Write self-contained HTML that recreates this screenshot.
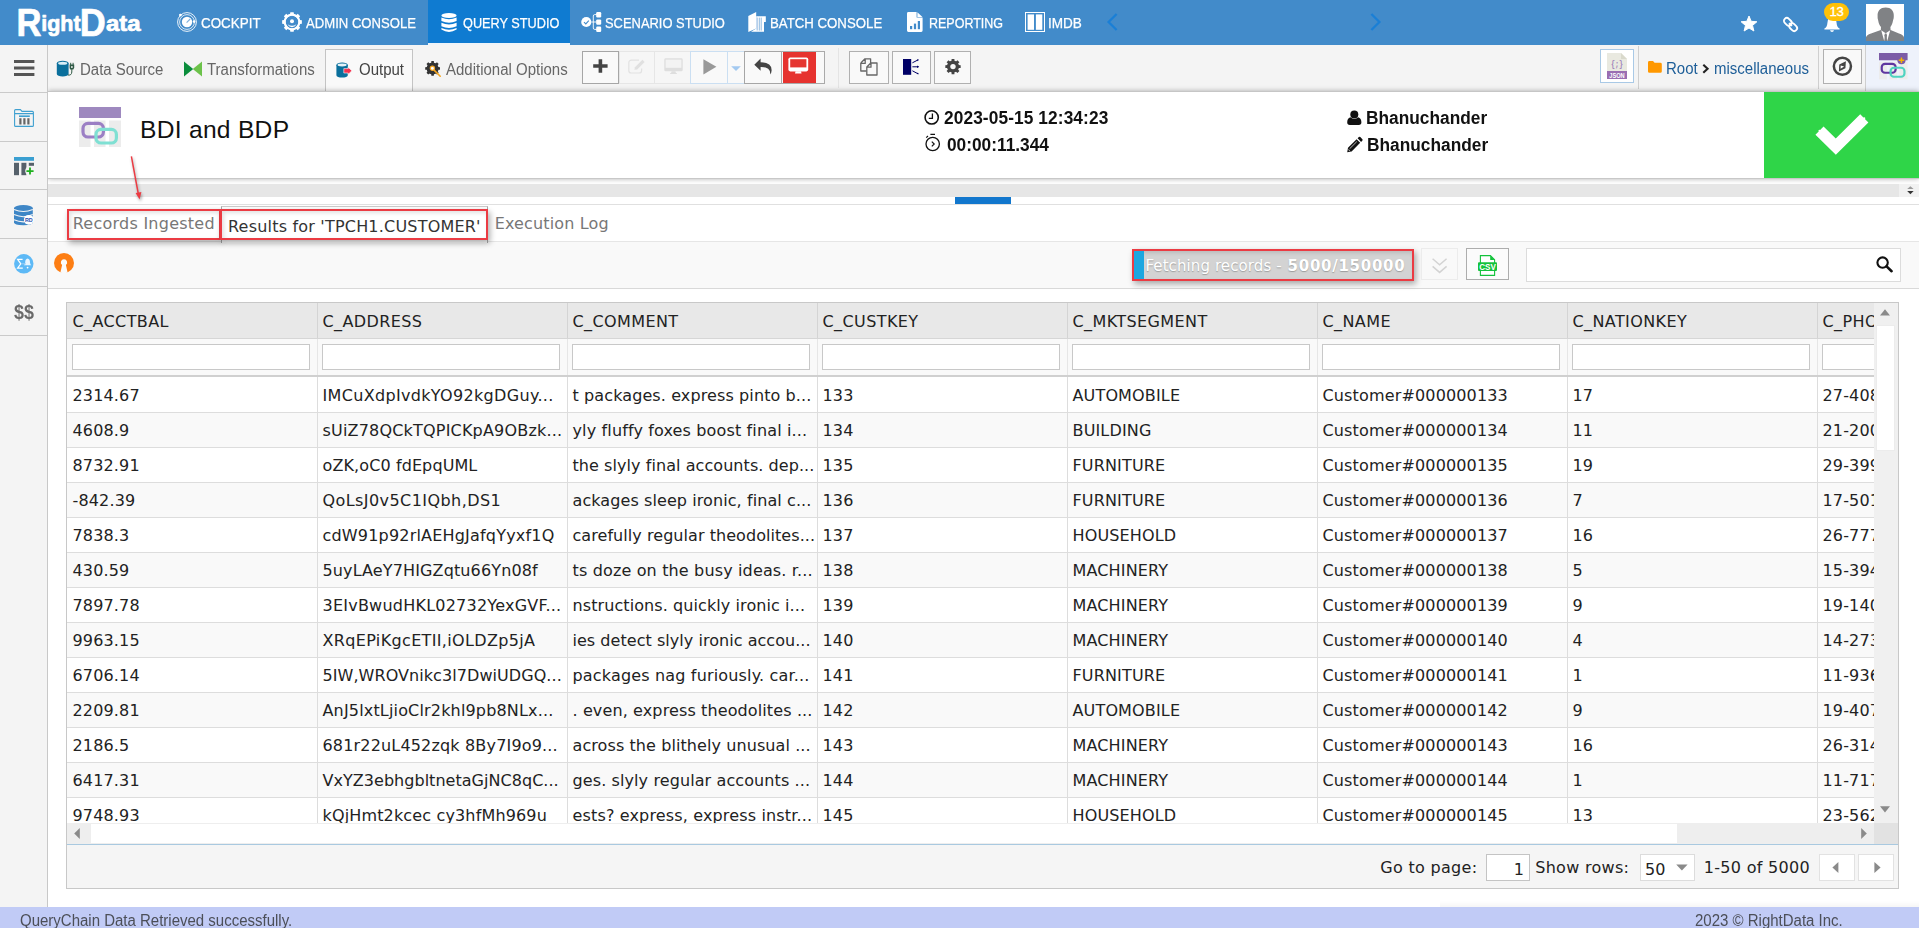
<!DOCTYPE html><html lang="en"><head><meta charset="utf-8"><title>RightData - Query Studio</title><style>
*{box-sizing:border-box;margin:0;padding:0}
html,body{width:1919px;height:928px;overflow:hidden;background:#fff}
body{font-family:"Liberation Sans",sans-serif;font-size:15px;color:#333;position:relative}
.abs{position:absolute}
body>svg{z-index:7}
.v{font-family:"DejaVu Sans","Liberation Sans",sans-serif;font-size:16px;letter-spacing:.15px;white-space:nowrap}
#nav{left:0;top:0;width:1919px;height:45px;background:#428bca;z-index:6}
.nt{position:absolute;top:14px;height:18px;line-height:18px;font-size:14.4px;color:#fff;white-space:nowrap;-webkit-text-stroke:.25px #fff}
#side{left:0;top:45px;width:48px;height:862px;background:#f4f4f4;border-right:1px solid #c8c8c8;z-index:5}
.sl{position:absolute;left:0;width:47px;height:1px;background:#cacaca}
#tb{left:48px;top:45px;width:1871px;height:46px;background:#f4f4f4}
.tt{position:absolute;top:60.5px;height:18px;line-height:18px;font-size:15.6px;color:#666;white-space:nowrap;transform:scaleX(.9615);transform-origin:0 0}
.btn{position:absolute;top:51px;height:33px;background:#f9f9f9;border:1px solid #a6a6a6}
.sep{position:absolute;width:1px;background:#d6d6d6}
#hd{left:48px;top:91px;width:1871px;height:88px;background:#fff;border-top:1px solid #c6c6c6;border-bottom:1px solid #c8c8c8;box-shadow:0 0 5px rgba(0,0,0,.3)}
.inf{position:absolute;font-weight:bold;font-size:18px;color:#111;white-space:nowrap;line-height:20px;height:20px;transform:scaleX(.9611);transform-origin:0 0}
.redbox{position:absolute;border:2px solid #eb3b43;box-shadow:2px 3px 6px rgba(0,0,0,.33), inset 2px 2px 4px rgba(0,0,0,.12)}
table{border-collapse:collapse}
.hc{position:absolute;top:303px;height:35px;width:251px;background:#e8e8e8;line-height:37px;padding-left:5.5px;color:#222;letter-spacing:.4px}
.fc{position:absolute;top:339px;height:36px;width:251px;background:#f9f9f9}
.fc i{position:absolute;left:5px;top:5px;width:238px;height:26px;background:#fff;border:1px solid #c8c8c8}
.row{position:absolute;left:67px;width:1807px;height:35px;border-bottom:1px solid #ddd;overflow:hidden}
.row.alt{background:#f9f9f9}
.c{position:absolute;top:0;height:35px;width:251px;line-height:36px;padding-left:5.5px;color:#222;overflow:hidden}
</style></head><body>
<div id="nav" class="abs">
<div class="abs" style="left:428px;top:0;width:142px;height:45px;background:#0f7bd1;border-bottom:2px solid #eef3f8"></div>
<svg class="abs" style="left:0;top:0;overflow:visible" width="160" height="45" viewBox="0 0 160 45" font-family="Liberation Sans,sans-serif" font-weight="bold" fill="#fff" stroke="#fff" stroke-width=".7" stroke-linejoin="round"><text x="16.6" y="36.4" font-size="38.5" textLength="25" lengthAdjust="spacingAndGlyphs">R</text><text x="41.2" y="30.7" font-size="21.5" textLength="39.4" lengthAdjust="spacingAndGlyphs">ight</text><text x="79.8" y="36.2" font-size="38.5" textLength="26" lengthAdjust="spacingAndGlyphs">D</text><text x="106" y="30.7" font-size="21.5" textLength="34.6" lengthAdjust="spacingAndGlyphs">ata</text></svg>
<div class="nt" style="left:200.5px;transform:scaleX(0.9317);transform-origin:0 0">COCKPIT</div>
<div class="nt" style="left:306.1px;transform:scaleX(0.9110);transform-origin:0 0">ADMIN CONSOLE</div>
<div class="nt" style="left:462.5px;transform:scaleX(0.8842);transform-origin:0 0">QUERY STUDIO</div>
<div class="nt" style="left:604.5px;transform:scaleX(0.8979);transform-origin:0 0">SCENARIO STUDIO</div>
<div class="nt" style="left:770.2px;transform:scaleX(0.9191);transform-origin:0 0">BATCH CONSOLE</div>
<div class="nt" style="left:928.5px;transform:scaleX(0.8687);transform-origin:0 0">REPORTING</div>
<div class="nt" style="left:1048.2px;transform:scaleX(0.9421);transform-origin:0 0">IMDB</div>
</div>
<div id="side" class="abs">
<div class="sl" style="top:47.0px"></div>
<div class="sl" style="top:96.0px"></div>
<div class="sl" style="top:144.0px"></div>
<div class="sl" style="top:193.0px"></div>
<div class="sl" style="top:241.0px"></div>
<div class="sl" style="top:290.0px"></div>
<div class="abs" style="left:14.3px;top:257.3px;font-weight:bold;font-size:20.6px;color:#6a6a6a;line-height:20px;transform:scaleX(.87);transform-origin:0 0">$$</div>
</div>
<div id="tb" class="abs"></div>
<div class="abs" style="left:325px;top:49px;width:88px;height:43px;background:#f9f9f9;border:1px solid #c4c4c4;border-bottom:none"></div>
<div class="tt" style="left:80.0px;color:#666;top:60.5px">Data Source</div>
<div class="tt" style="left:207.20000000000002px;color:#666;top:60.5px">Transformations</div>
<div class="tt" style="left:359.0px;color:#444;top:61.3px">Output</div>
<div class="tt" style="left:445.7px;color:#666;top:60.5px">Additional Options</div>
<div class="btn" style="left:582px;width:37px"></div>
<div class="btn" style="left:619px;width:36px;border-color:#e6e6e6;background:#f6f6f6"></div>
<div class="btn" style="left:654px;width:37px;border-color:#e6e6e6;background:#f6f6f6"></div>
<div class="btn" style="left:690px;width:38px;border-color:#cbdff2"></div>
<div class="btn" style="left:727px;width:18px;border-color:#cbdff2"></div>
<div class="btn" style="left:744px;width:38px"></div>
<div class="btn" style="left:781px;width:44px;border-color:#aaa"></div>
<div class="abs" style="left:783px;top:52px;width:33px;height:31px;background:#e6332f"></div>
<div class="sep" style="left:838px;top:48px;height:40px;background:#e4e4e4"></div>
<div class="btn" style="left:849px;width:40px;border-color:#b0b0b0"></div>
<div class="btn" style="left:892px;width:39px;border-color:#b0b0b0"></div>
<div class="btn" style="left:934px;width:37px;border-color:#b0b0b0"></div>
<div class="btn" style="left:1600px;top:49px;width:34px;height:34px;border-color:#a9c9e6;background:#fff"></div>
<div class="sep" style="left:1638px;top:46px;height:43px;background:#cfcfcf"></div>
<div class="tt" style="left:1665.8px;top:59.5px;color:#1d5e98">Root</div>
<div class="tt" style="left:1714.4px;top:59.5px;color:#1d5e98">miscellaneous</div>
<div class="sep" style="left:1818px;top:46px;height:43px;background:#cfcfcf"></div>
<div class="btn" style="left:1823px;top:49px;width:39px;height:35px;border-color:#b0b0b0"></div>
<div class="abs" style="left:1865px;top:45px;width:54px;height:46px;background:#eef2fb;border-left:1px solid #cfcfcf"></div>
<div id="hd" class="abs"></div>
<div class="abs" style="left:140px;top:115px;font-size:24.6px;line-height:30px;color:#111;white-space:nowrap;letter-spacing:.28px">BDI and BDP</div>
<div class="inf" style="left:944.2px;top:108px;letter-spacing:.1px">2023-05-15 12:34:23</div>
<div class="inf" style="left:947.2px;top:135px">00:00:11.344</div>
<div class="inf" style="left:1365.6px;top:108px">Bhanuchander</div>
<div class="inf" style="left:1367px;top:135px">Bhanuchander</div>
<div class="abs" style="left:1764px;top:92px;width:155px;height:86px;background:#2fd548"></div>
<div class="abs" style="left:48px;top:184px;width:1871px;height:13px;background:#e6e6e6"></div>
<div class="abs" style="left:955px;top:197px;width:56px;height:7px;background:#1277cd"></div>
<div class="abs" style="left:48px;top:204px;width:1871px;height:1px;background:#e0e0e0"></div>
<div class="abs" style="left:48px;top:241px;width:1871px;height:48px;background:#f9f9f9;border-top:1px solid #e6e6e6;border-bottom:1px solid #d9d9d9"></div>
<div class="abs" style="left:221px;top:206px;width:267px;height:37px;background:#fff;border:1px solid #aaa;border-top-color:#ccc;border-bottom:none"></div>
<div class="redbox" style="left:67px;top:209px;width:154px;height:31px;background:#fff"></div>
<div class="redbox" style="left:220px;top:209px;width:268px;height:31px;background:#fff"></div>
<div class="abs v" style="left:72.7px;top:214px;line-height:20px;color:#777;letter-spacing:.25px">Records Ingested</div>
<div class="abs v" style="left:228px;top:217px;line-height:20px;color:#333;letter-spacing:.2px">Results for 'TPCH1.CUSTOMER'</div>
<div class="abs v" style="left:494.7px;top:214px;line-height:20px;color:#777">Execution Log</div>
<div class="redbox" style="left:1132px;top:249px;width:282px;height:32px;background:#d3d3d3"></div>
<div class="abs" style="left:1134px;top:251px;width:10px;height:28px;background:#1ca7e0"></div>
<div class="abs v" style="left:1145.4px;top:255.5px;line-height:20px;font-size:15px;color:#fff;text-shadow:0 1px 1px rgba(120,120,120,.6);letter-spacing:.1px">Fetching records - <b style="letter-spacing:.72px;margin-left:1px">5000/150000</b></div>
<div class="abs" style="left:1421px;top:248px;width:37px;height:32px;border:1px solid #ececec;background:#f9f9f9"></div>
<div class="abs" style="left:1466px;top:248px;width:43px;height:32px;border:1px solid #adadad;background:#fbfbfb"></div>
<div class="abs" style="left:1526px;top:248px;width:375px;height:34px;border:1px solid #dcdcdc;background:#fff"></div>
<div class="abs" style="left:66px;top:302px;width:1833px;height:587px;border:1px solid #c8c8c8;background:#f5f5f5"></div>
<div class="abs" style="left:67px;top:303px;width:1808px;height:520px;overflow:hidden;background:#fff">
</div>
<div class="abs" style="left:67px;top:303px;width:1808px;height:35px;background:#e8e8e8;overflow:hidden"></div>
<div class="hc v" style="left:67px;width:251px;overflow:hidden">C_ACCTBAL</div>
<div class="hc v" style="left:317px;width:251px;overflow:hidden">C_ADDRESS</div>
<div class="hc v" style="left:567px;width:251px;overflow:hidden">C_COMMENT</div>
<div class="hc v" style="left:817px;width:251px;overflow:hidden">C_CUSTKEY</div>
<div class="hc v" style="left:1067px;width:251px;overflow:hidden">C_MKTSEGMENT</div>
<div class="hc v" style="left:1317px;width:251px;overflow:hidden">C_NAME</div>
<div class="hc v" style="left:1567px;width:251px;overflow:hidden">C_NATIONKEY</div>
<div class="hc v" style="left:1817px;width:58px;overflow:hidden">C_PHONE</div>
<div class="abs" style="left:67px;top:338px;width:1808px;height:1px;background:#d6d6d6"></div>
<div class="fc" style="left:67px;width:251px;overflow:hidden"><i></i></div>
<div class="fc" style="left:317px;width:251px;overflow:hidden"><i></i></div>
<div class="fc" style="left:567px;width:251px;overflow:hidden"><i></i></div>
<div class="fc" style="left:817px;width:251px;overflow:hidden"><i></i></div>
<div class="fc" style="left:1067px;width:251px;overflow:hidden"><i></i></div>
<div class="fc" style="left:1317px;width:251px;overflow:hidden"><i></i></div>
<div class="fc" style="left:1567px;width:251px;overflow:hidden"><i></i></div>
<div class="fc" style="left:1817px;width:58px;overflow:hidden"><i></i></div>
<div class="abs" style="left:67px;top:375px;width:1808px;height:2px;background:#d0d0d0"></div>
<div class="row" style="top:378px;height:35px">
<div class="c v" style="left:0px">2314.67</div>
<div class="c v" style="left:250px;letter-spacing:0.329px">IMCuXdpIvdkYO92kgDGuy...</div>
<div class="c v" style="left:500px;letter-spacing:0.107px">t packages. express pinto b...</div>
<div class="c v" style="left:750px">133</div>
<div class="c v" style="left:1000px">AUTOMOBILE</div>
<div class="c v" style="left:1250px">Customer#000000133</div>
<div class="c v" style="left:1500px">17</div>
<div class="c v" style="left:1750px">27-408-997-8430</div>
</div>
<div class="row alt" style="top:413px;height:35px">
<div class="c v" style="left:0px">4608.9</div>
<div class="c v" style="left:250px;letter-spacing:0.190px">sUiZ78QCkTQPICKpA9OBzk...</div>
<div class="c v" style="left:500px;letter-spacing:0.141px">yly fluffy foxes boost final i...</div>
<div class="c v" style="left:750px">134</div>
<div class="c v" style="left:1000px">BUILDING</div>
<div class="c v" style="left:1250px">Customer#000000134</div>
<div class="c v" style="left:1500px">11</div>
<div class="c v" style="left:1750px">21-200-159-5932</div>
</div>
<div class="row" style="top:448px;height:35px">
<div class="c v" style="left:0px">8732.91</div>
<div class="c v" style="left:250px;letter-spacing:0.106px">oZK,oC0 fdEpqUML</div>
<div class="c v" style="left:500px;letter-spacing:0.066px">the slyly final accounts. dep...</div>
<div class="c v" style="left:750px">135</div>
<div class="c v" style="left:1000px">FURNITURE</div>
<div class="c v" style="left:1250px">Customer#000000135</div>
<div class="c v" style="left:1500px">19</div>
<div class="c v" style="left:1750px">29-399-293-6241</div>
</div>
<div class="row alt" style="top:483px;height:35px">
<div class="c v" style="left:0px">-842.39</div>
<div class="c v" style="left:250px;letter-spacing:0.428px">QoLsJ0v5C1IQbh,DS1</div>
<div class="c v" style="left:500px;letter-spacing:0.087px">ackages sleep ironic, final c...</div>
<div class="c v" style="left:750px">136</div>
<div class="c v" style="left:1000px">FURNITURE</div>
<div class="c v" style="left:1250px">Customer#000000136</div>
<div class="c v" style="left:1500px">7</div>
<div class="c v" style="left:1750px">17-501-210-4726</div>
</div>
<div class="row" style="top:518px;height:35px">
<div class="c v" style="left:0px">7838.3</div>
<div class="c v" style="left:250px;letter-spacing:0.192px">cdW91p92rlAEHgJafqYyxf1Q</div>
<div class="c v" style="left:500px;letter-spacing:0.056px">carefully regular theodolites...</div>
<div class="c v" style="left:750px">137</div>
<div class="c v" style="left:1000px">HOUSEHOLD</div>
<div class="c v" style="left:1250px">Customer#000000137</div>
<div class="c v" style="left:1500px">16</div>
<div class="c v" style="left:1750px">26-777-409-5654</div>
</div>
<div class="row alt" style="top:553px;height:35px">
<div class="c v" style="left:0px">430.59</div>
<div class="c v" style="left:250px;letter-spacing:0.127px">5uyLAeY7HIGZqtu66Yn08f</div>
<div class="c v" style="left:500px;letter-spacing:0.150px">ts doze on the busy ideas. r...</div>
<div class="c v" style="left:750px">138</div>
<div class="c v" style="left:1000px">MACHINERY</div>
<div class="c v" style="left:1250px">Customer#000000138</div>
<div class="c v" style="left:1500px">5</div>
<div class="c v" style="left:1750px">15-394-860-4589</div>
</div>
<div class="row" style="top:588px;height:35px">
<div class="c v" style="left:0px">7897.78</div>
<div class="c v" style="left:250px;letter-spacing:0.230px">3EIvBwudHKL02732YexGVF...</div>
<div class="c v" style="left:500px;letter-spacing:0.087px">nstructions. quickly ironic i...</div>
<div class="c v" style="left:750px">139</div>
<div class="c v" style="left:1000px">MACHINERY</div>
<div class="c v" style="left:1250px">Customer#000000139</div>
<div class="c v" style="left:1500px">9</div>
<div class="c v" style="left:1750px">19-140-352-1403</div>
</div>
<div class="row alt" style="top:623px;height:35px">
<div class="c v" style="left:0px">9963.15</div>
<div class="c v" style="left:250px;letter-spacing:0.346px">XRqEPiKgcETII,iOLDZp5jA</div>
<div class="c v" style="left:500px;letter-spacing:0.041px">ies detect slyly ironic accou...</div>
<div class="c v" style="left:750px">140</div>
<div class="c v" style="left:1000px">MACHINERY</div>
<div class="c v" style="left:1250px">Customer#000000140</div>
<div class="c v" style="left:1500px">4</div>
<div class="c v" style="left:1750px">14-273-885-6505</div>
</div>
<div class="row" style="top:658px;height:35px">
<div class="c v" style="left:0px">6706.14</div>
<div class="c v" style="left:250px;letter-spacing:0.070px">5IW,WROVnikc3l7DwiUDGQ...</div>
<div class="c v" style="left:500px;letter-spacing:0.167px">packages nag furiously. car...</div>
<div class="c v" style="left:750px">141</div>
<div class="c v" style="left:1000px">FURNITURE</div>
<div class="c v" style="left:1250px">Customer#000000141</div>
<div class="c v" style="left:1500px">1</div>
<div class="c v" style="left:1750px">11-936-295-6204</div>
</div>
<div class="row alt" style="top:693px;height:35px">
<div class="c v" style="left:0px">2209.81</div>
<div class="c v" style="left:250px;letter-spacing:0.168px">AnJ5lxtLjioClr2khl9pb8NLx...</div>
<div class="c v" style="left:500px;letter-spacing:0.118px">. even, express theodolites ...</div>
<div class="c v" style="left:750px">142</div>
<div class="c v" style="left:1000px">AUTOMOBILE</div>
<div class="c v" style="left:1250px">Customer#000000142</div>
<div class="c v" style="left:1500px">9</div>
<div class="c v" style="left:1750px">19-407-425-2584</div>
</div>
<div class="row" style="top:728px;height:35px">
<div class="c v" style="left:0px">2186.5</div>
<div class="c v" style="left:250px;letter-spacing:0.169px">681r22uL452zqk 8By7I9o9...</div>
<div class="c v" style="left:500px;letter-spacing:0.085px">across the blithely unusual ...</div>
<div class="c v" style="left:750px">143</div>
<div class="c v" style="left:1000px">MACHINERY</div>
<div class="c v" style="left:1250px">Customer#000000143</div>
<div class="c v" style="left:1500px">16</div>
<div class="c v" style="left:1750px">26-314-406-7725</div>
</div>
<div class="row alt" style="top:763px;height:35px">
<div class="c v" style="left:0px">6417.31</div>
<div class="c v" style="left:250px;letter-spacing:0.035px">VxYZ3ebhgbltnetaGjNC8qC...</div>
<div class="c v" style="left:500px;letter-spacing:0.102px">ges. slyly regular accounts ...</div>
<div class="c v" style="left:750px">144</div>
<div class="c v" style="left:1000px">MACHINERY</div>
<div class="c v" style="left:1250px">Customer#000000144</div>
<div class="c v" style="left:1500px">1</div>
<div class="c v" style="left:1750px">11-717-379-4478</div>
</div>
<div class="row" style="top:798px;height:25px;border-bottom:none">
<div class="c v" style="left:0px">9748.93</div>
<div class="c v" style="left:250px;letter-spacing:0.150px">kQjHmt2kcec cy3hfMh969u</div>
<div class="c v" style="left:500px;letter-spacing:0.150px">ests? express, express instr...</div>
<div class="c v" style="left:750px">145</div>
<div class="c v" style="left:1000px">HOUSEHOLD</div>
<div class="c v" style="left:1250px">Customer#000000145</div>
<div class="c v" style="left:1500px">13</div>
<div class="c v" style="left:1750px">23-562-444-8454</div>
</div>
<div class="abs" style="left:317px;top:303px;width:1px;height:35px;background:#d4d4d4"></div>
<div class="abs" style="left:317px;top:339px;width:1px;height:36px;background:#e6e6e6"></div>
<div class="abs" style="left:317px;top:377px;width:1px;height:446px;background:#ddd"></div>
<div class="abs" style="left:567px;top:303px;width:1px;height:35px;background:#d4d4d4"></div>
<div class="abs" style="left:567px;top:339px;width:1px;height:36px;background:#e6e6e6"></div>
<div class="abs" style="left:567px;top:377px;width:1px;height:446px;background:#ddd"></div>
<div class="abs" style="left:817px;top:303px;width:1px;height:35px;background:#d4d4d4"></div>
<div class="abs" style="left:817px;top:339px;width:1px;height:36px;background:#e6e6e6"></div>
<div class="abs" style="left:817px;top:377px;width:1px;height:446px;background:#ddd"></div>
<div class="abs" style="left:1067px;top:303px;width:1px;height:35px;background:#d4d4d4"></div>
<div class="abs" style="left:1067px;top:339px;width:1px;height:36px;background:#e6e6e6"></div>
<div class="abs" style="left:1067px;top:377px;width:1px;height:446px;background:#ddd"></div>
<div class="abs" style="left:1317px;top:303px;width:1px;height:35px;background:#d4d4d4"></div>
<div class="abs" style="left:1317px;top:339px;width:1px;height:36px;background:#e6e6e6"></div>
<div class="abs" style="left:1317px;top:377px;width:1px;height:446px;background:#ddd"></div>
<div class="abs" style="left:1567px;top:303px;width:1px;height:35px;background:#d4d4d4"></div>
<div class="abs" style="left:1567px;top:339px;width:1px;height:36px;background:#e6e6e6"></div>
<div class="abs" style="left:1567px;top:377px;width:1px;height:446px;background:#ddd"></div>
<div class="abs" style="left:1817px;top:303px;width:1px;height:35px;background:#d4d4d4"></div>
<div class="abs" style="left:1817px;top:339px;width:1px;height:36px;background:#e6e6e6"></div>
<div class="abs" style="left:1817px;top:377px;width:1px;height:446px;background:#ddd"></div>
<div class="abs" style="left:1874px;top:303px;width:24px;height:520px;background:#f0f0f0"></div>
<div class="abs" style="left:1876px;top:325px;width:19px;height:126px;background:#fff;border:1px solid #ececec"></div>
<div class="abs" style="left:67px;top:823px;width:1831px;height:21px;background:#eeeeee"></div>
<div class="abs" style="left:91px;top:824px;width:1586px;height:19px;background:#fff"></div>
<div class="abs" style="left:1874px;top:823px;width:24px;height:21px;background:#e2e2e2"></div>
<div class="abs" style="left:67px;top:844px;width:1831px;height:1px;background:#a9c9e0"></div>
<div class="abs v" style="left:1380.3px;top:858px;line-height:20px;color:#222;letter-spacing:.3px">Go to page:</div>
<div class="abs v" style="left:1486px;top:854px;width:44px;height:27px;border:1px solid #c4c4c4;background:#fff;text-align:right;padding-right:5px;line-height:29px;color:#222">1</div>
<div class="abs v" style="left:1535.2px;top:858px;line-height:20px;color:#222;letter-spacing:.3px">Show rows:</div>
<div class="abs v" style="left:1640px;top:854px;width:55px;height:27px;border:1px solid #dcdcdc;background:#fff;padding-left:4px;line-height:29px;color:#222">50</div>
<div class="abs v" style="left:1703.8px;top:858px;line-height:20px;color:#222;letter-spacing:.3px">1-50 of 5000</div>
<div class="abs" style="left:1819px;top:854px;width:36px;height:27px;border:1px solid #e2e2e2;background:#fff"></div>
<div class="abs" style="left:1858px;top:854px;width:36px;height:27px;border:1px solid #e2e2e2;background:#fff"></div>
<div class="abs" style="left:1440px;top:901px;width:479px;height:6px;background:linear-gradient(to bottom,rgba(0,0,0,0),rgba(0,0,0,.035))"></div>
<div class="abs" style="left:0;top:907px;width:1919px;height:21px;background:#c1cbf6"></div>
<div class="abs" style="left:20px;top:911.6px;font-size:15.6px;line-height:18px;color:#4c4f58;white-space:nowrap;transform:scaleX(.9615);transform-origin:0 0">QueryChain Data Retrieved successfully.</div>
<div class="abs" style="left:1695px;top:911.6px;font-size:15.6px;line-height:18px;color:#4c4f58;white-space:nowrap;transform:scaleX(.9615);transform-origin:0 0">2023 © RightData Inc.</div>
<svg class="abs" style="left:177px;top:12px;overflow:visible" width="20" height="20" viewBox="0 0 20 20" ><circle cx="10" cy="10" r="9.4" fill="none" stroke="#fff" stroke-width=".9"/><circle cx="10" cy="10" r="7.4" fill="none" stroke="#fff" stroke-width=".8"/><circle cx="10" cy="10" r="5.2" fill="#fff"/><path d="M9.6 10.6 L13.2 7" stroke="#7fb0dc" stroke-width="1.1" fill="none"/><circle cx="3.4" cy="3.1" r="1.4" fill="#fff"/><circle cx="17.1" cy="9.6" r="1.3" fill="#fff"/></svg>
<svg class="abs" style="left:282px;top:12px;overflow:visible" width="20" height="20" viewBox="0 0 20 20" ><path d="M11.98 17.96 L11.64 19.86 L8.36 19.86 L8.02 17.96 L5.77 17.03 L4.19 18.14 L1.86 15.81 L2.97 14.23 L2.04 11.98 L0.14 11.64 L0.14 8.36 L2.04 8.02 L2.97 5.77 L1.86 4.19 L4.19 1.86 L5.77 2.97 L8.02 2.04 L8.36 0.14 L11.64 0.14 L11.98 2.04 L14.23 2.97 L15.81 1.86 L18.14 4.19 L17.03 5.77 L17.96 8.02 L19.86 8.36 L19.86 11.64 L17.96 11.98 L17.03 14.23 L18.14 15.81 L15.81 18.14 L14.23 17.03Z M10 3.6 a6.4 6.4 0 1 0 0.001 0Z" fill="#fff" fill-rule="evenodd"/><circle cx="10" cy="10" r="7.3" fill="none" stroke="#fff" stroke-width="1.9"/><circle cx="10" cy="9.2" r="2" fill="#fff"/><path d="M5.6 12.2 Q10 15.2 14.4 12.2 Q13.6 14.6 10 15.3 Q6.4 14.6 5.6 12.2Z" fill="#fff"/></svg>
<svg class="abs" style="left:441px;top:13px;overflow:visible" width="16" height="19" viewBox="0 0 16 19" ><ellipse cx="8" cy="2.6" rx="7.6" ry="2.5" fill="#fff"/><path d="M.4 4.6 Q8 8 15.6 4.6 V8 Q8 11.4 .4 8Z" fill="#fff"/><path d="M.4 9.8 Q8 13.2 15.6 9.8 V13.2 Q8 16.6 .4 13.2Z" fill="#fff"/><path d="M.4 15 Q8 18.4 15.6 15 V16.6 Q8 21.2 .4 16.6Z" fill="#fff"/></svg>
<svg class="abs" style="left:581px;top:12px;overflow:visible" width="20" height="20" viewBox="0 0 20 20" ><circle cx="5.3" cy="10" r="5.1" fill="#fff"/><path d="M3 10.2 L4.8 11.9 L7.8 8.6" stroke="#428bca" stroke-width="1.1" fill="none"/><path d="M16 2.6 H13.6 Q12.3 2.6 12.3 4 V16 Q12.3 17.4 13.6 17.4 H16 M10.4 10 H16" stroke="#fff" stroke-width=".9" fill="none"/><rect x="15.2" y="0" width="5" height="5.4" rx="1.2" fill="#fff"/><rect x="15.2" y="7.4" width="5" height="5.3" rx="1.2" fill="#fff"/><rect x="15.2" y="14.6" width="5" height="5.4" rx="1.2" fill="#fff"/></svg>
<svg class="abs" style="left:747.7px;top:12px;overflow:visible" width="19" height="20" viewBox="0 0 19 20" ><path d="M.3 4 L8.2 0 V16.4 L.3 20Z" fill="#fff"/><path d="M8.2 4.2 H17.8 V10 H16 V19.8 H3 L8.2 16.6Z" fill="#fff"/><path d="M9.2 5.4 V18.6" stroke="#a9c8e8" stroke-width="1.3"/><path d="M11.3 5.6 V18.6 M13.2 5.6 V18.6" stroke="#5c9bd3" stroke-width=".7"/></svg>
<svg class="abs" style="left:907px;top:12px;overflow:visible" width="16" height="20" viewBox="0 0 16 20" ><path d="M1.4 0 H9.6 V5.6 H15.6 V18.6 Q15.6 20 14.2 20 H1.4 Q0 20 0 18.6 V1.4 Q0 0 1.4 0Z" fill="#fff"/><path d="M10.4 .2 L15.4 5 H10.4Z" fill="#fff"/><rect x="3" y="14" width="2.2" height="3.2" fill="#428bca"/><rect x="6.9" y="11.6" width="2.2" height="5.6" fill="#428bca"/><rect x="10.8" y="9" width="2.2" height="8.2" fill="#428bca"/></svg>
<svg class="abs" style="left:1025px;top:12px;overflow:visible" width="20" height="20" viewBox="0 0 20 20" ><rect x=".5" y=".5" width="19" height="19" fill="none" stroke="#fff" stroke-width="1"/><rect x="2.6" y="2.4" width="6.4" height="15.4" fill="#fff"/><rect x="10.9" y="2.4" width="6.4" height="15.4" fill="#fff"/></svg>
<svg class="abs" style="left:1107px;top:13px;overflow:visible" width="11" height="18" viewBox="0 0 11 18" ><path d="M9.6 1 L1.6 9 L9.6 17" fill="none" stroke="#1a7fd6" stroke-width="2.3"/></svg>
<svg class="abs" style="left:1369.5px;top:13px;overflow:visible" width="11" height="18" viewBox="0 0 11 18" ><path d="M1.4 1 L9.4 9 L1.4 17" fill="none" stroke="#1a7fd6" stroke-width="2.3"/></svg>
<svg class="abs" style="left:1740px;top:15px;overflow:visible" width="18" height="17" viewBox="0 0 18 17" ><path d="M9.00 1.00 L11.17 6.31 L16.89 6.74 L12.52 10.44 L13.88 16.01 L9.00 13.00 L4.12 16.01 L5.48 10.44 L1.11 6.74 L6.83 6.31Z" fill="#fff" stroke="#fff" stroke-width="1" stroke-linejoin="round"/></svg>
<svg class="abs" style="left:1782px;top:16px;overflow:visible" width="17" height="17" viewBox="0 0 17 17" ><g fill="none" stroke="#fff" stroke-width="1.8" transform="rotate(45 8.5 8.5)"><rect x="0.4" y="5.6" width="8.6" height="5.8" rx="2.9"/><rect x="8" y="5.6" width="8.6" height="5.8" rx="2.9"/></g><path d="M7 7 L10 10" stroke="#fff" stroke-width="1.6"/></svg>
<svg class="abs" style="left:1823px;top:15px;overflow:visible" width="18" height="18" viewBox="0 0 18 18" ><path d="M9 1.2 Q13.4 2 13.6 8 Q13.8 12 16.6 13.6 V14.6 H1.4 V13.6 Q4.2 12 4.4 8 Q4.6 2 9 1.2Z" fill="#fff"/><path d="M7 15.2 H11 Q10.6 17 9 17 Q7.4 17 7 15.2Z" fill="#fff"/></svg>
<div class="abs" style="z-index:8;left:1824px;top:3px;width:25px;height:18px;border-radius:9px;background:#ffc107;color:#fff;font-size:13.2px;line-height:18px;text-align:center;letter-spacing:-.4px;-webkit-text-stroke:.3px #fff">13</div>
<svg class="abs" style="left:1866px;top:4px;overflow:visible" width="38" height="37" viewBox="0 0 38 37" ><rect width="38" height="37" fill="#fff"/><path d="M19.7 3.6 C25 3.6 28 7 27.8 12 C27.9 13.5 27.6 15 27 16.5 C26.6 19.5 25.6 21.5 24.4 23 L24.6 26 L33 29.5 Q37.6 31 38 33.5 V37 H0 V33.5 Q.4 31 5 29.5 L14.8 26 L15 23 C13.6 21.5 12.6 19.5 12.2 16.5 C11.6 15 11.5 13.5 11.6 12 C11.4 7 14.4 3.6 19.7 3.6Z" fill="#808285"/><path d="M15.2 26.2 L18.2 37 L19.7 30 L21.2 37 L24.2 26.2 L19.7 29.2Z" fill="#fff"/><path d="M18.9 29.6 H20.5 L21 31.2 L20.4 37 H19 L18.4 31.2Z" fill="#808285"/></svg>
<svg class="abs" style="left:56px;top:60px;overflow:visible" width="20" height="18" viewBox="0 0 20 18" ><path d="M0.8 3.4000000000000004 V14.000000000000002 A5.9 2.6 0 0 0 12.600000000000001 14.000000000000002 V3.4000000000000004Z" fill="#0a6f9c"/><ellipse cx="6.7" cy="3.4000000000000004" rx="5.9" ry="2.6" fill="#0a6f9c"/><ellipse cx="6.7" cy="3.3" rx="4.6" ry="1.5" fill="#d9eef7"/><path d="M12 15 Q15.6 15.6 15.8 12 V9.6" fill="none" stroke="#2f5a45" stroke-width="1"/><path d="M13.6 4.6 H18.2 V7.2 Q18.2 9.8 15.9 9.8 Q13.6 9.8 13.6 7.2Z" fill="#2f5a45"/><path d="M14.7 2.8 V5 M17.1 2.8 V5" stroke="#2f5a45" stroke-width="1"/><circle cx="15.9" cy="7" r=".9" fill="#f4f4f4"/></svg>
<svg class="abs" style="left:184px;top:61px;overflow:visible" width="18" height="16" viewBox="0 0 18 16" ><path d="M0 .4 L9.2 8 L0 15.6Z" fill="#0b8d3c"/><path d="M18 .4 L8.8 8 L18 15.6Z" fill="#6cc24a"/></svg>
<svg class="abs" style="left:336px;top:61.5px;overflow:visible" width="17" height="16" viewBox="0 0 17 16" ><path d="M0.4 3.0 V13.2 A5.7 2.4 0 0 0 11.8 13.2 V3.0Z" fill="#0a6f9c"/><ellipse cx="6.1000000000000005" cy="3.0" rx="5.7" ry="2.4" fill="#0a6f9c"/><ellipse cx="6.1" cy="3" rx="4.6" ry="1.4" fill="#e6f3f9"/><path d="M7.8 6.6 H12.2 V5.2 L15.8 8.8 L12.2 12.4 V11 H7.8Z" fill="#f4324f" stroke="#f9f9f9" stroke-width=".6"/></svg>
<svg class="abs" style="left:425px;top:61.3px;overflow:visible" width="17" height="17" viewBox="0 0 17 17" ><path d="M13.03 6.05 L15.00 6.17 L15.00 8.63 L13.03 8.75 L12.40 10.29 L13.70 11.76 L11.96 13.50 L10.49 12.20 L8.95 12.83 L8.83 14.80 L6.37 14.80 L6.25 12.83 L4.71 12.20 L3.24 13.50 L1.50 11.76 L2.80 10.29 L2.17 8.75 L0.20 8.63 L0.20 6.17 L2.17 6.05 L2.80 4.51 L1.50 3.04 L3.24 1.30 L4.71 2.60 L6.25 1.97 L6.37 0.00 L8.83 0.00 L8.95 1.97 L10.49 2.60 L11.96 1.30 L13.70 3.04 L12.40 4.51Z" fill="#333"/><circle cx="7.6" cy="7.4" r="6" fill="#333"/><path d="M8.6 8.6 L15.2 15.2" stroke="#f5a623" stroke-width="1.6" stroke-linecap="round"/><circle cx="7.4" cy="7.3" r="2.1" fill="#fff" stroke="#f5a623" stroke-width="1.2"/></svg>
<svg class="abs" style="left:593.3px;top:59px;overflow:visible" width="15" height="14" viewBox="0 0 15 14" ><path d="M7.4 .2 V13.8 M.2 7 H14.6" stroke="#444" stroke-width="3.6" fill="none"/></svg>
<svg class="abs" style="left:628px;top:58.5px;overflow:visible" width="18" height="15" viewBox="0 0 18 15" ><path d="M11 1.2 H3.4 Q.8 1.2 .8 3.8 V11.4 Q.8 14 3.4 14 H11 Q13.6 14 13.6 11.4 V9.6" fill="none" stroke="#e2e2e2" stroke-width="1.2"/><path d="M6.4 10.8 L7 8.2 L14.4 .8 L16.6 3 L9.2 10.4Z" fill="#e0e0e0"/></svg>
<svg class="abs" style="left:663.5px;top:58px;overflow:visible" width="19" height="16" viewBox="0 0 19 16" ><rect x=".3" y=".3" width="18.4" height="13" rx="1.4" fill="#dedede"/><rect x="1.6" y="1.6" width="15.8" height="8.2" fill="#f3f3f3"/><path d="M7.6 13.3 H11.4 L12 15.3 H7Z M6.2 15 H12.8 V15.9 H6.2Z" fill="#dedede"/></svg>
<svg class="abs" style="left:703px;top:59px;overflow:visible" width="14" height="16" viewBox="0 0 14 16" ><path d="M.4 .2 L13.4 7.8 L.4 15.6Z" fill="#999"/></svg>
<svg class="abs" style="left:731px;top:66px;overflow:visible" width="10" height="5" viewBox="0 0 10 5" ><path d="M.2 .2 H9.8 L5 5Z" fill="#a3c9f0"/></svg>
<svg class="abs" style="left:754px;top:57.5px;overflow:visible" width="18" height="17" viewBox="0 0 18 17" ><path d="M6.6 .6 V4.2 Q17.8 4.2 17.6 12.4 Q17.5 14.8 16.2 16.4 Q16.8 8.8 6.6 9 V12.8 L.3 6.7Z" fill="#444"/></svg>
<svg class="abs" style="left:788px;top:57.3px;overflow:visible" width="21" height="17" viewBox="0 0 21 17" ><rect x=".4" y=".4" width="19.8" height="14" rx="1.8" fill="#fff"/><rect x="2.2" y="2.2" width="16.2" height="8.2" fill="#e53530"/><path d="M7.6 14.2 H13 L13.6 16.6 H7Z" fill="#fff"/></svg>
<svg class="abs" style="left:860px;top:58px;overflow:visible" width="18" height="18" viewBox="0 0 18 18" ><path d="M.8 5 L5 .8 H10.6 V6.4 M.8 5 V13 H6.6 M.8 5.4 H5.2 V.8" fill="none" stroke="#666" stroke-width="1.3" stroke-linejoin="round"/><path d="M6.8 9 L10.8 5 H17 V17 H6.8Z M6.8 9.2 H11 V5" fill="#f8f8f8" stroke="#666" stroke-width="1.3" stroke-linejoin="round"/></svg>
<svg class="abs" style="left:903px;top:59px;overflow:visible" width="17" height="16" viewBox="0 0 17 16" ><rect x="0" y="0" width="8.2" height="15.8" fill="#000066"/><path d="M9.4 3.8 L15 .9 M9.4 7.8 H15.4 M9.4 11.8 L15 14.8" stroke="#000066" stroke-width="1" fill="none"/><path d="M16.2 7.8 L14 6.6 V9Z M16 .4 L13.8 .6 L14.8 2.2Z M16 15.3 L13.8 15.1 L14.8 13.5Z" fill="#000066"/></svg>
<svg class="abs" style="left:945px;top:59px;overflow:visible" width="16" height="16" viewBox="0 0 16 16" ><path d="M13.40 6.12 L15.67 6.19 L15.67 9.01 L13.40 9.08 L12.87 10.37 L14.42 12.03 L12.43 14.02 L10.77 12.47 L9.48 13.00 L9.41 15.27 L6.59 15.27 L6.52 13.00 L5.23 12.47 L3.57 14.02 L1.58 12.03 L3.13 10.37 L2.60 9.08 L0.33 9.01 L0.33 6.19 L2.60 6.12 L3.13 4.83 L1.58 3.17 L3.57 1.18 L5.23 2.73 L6.52 2.20 L6.59 -0.07 L9.41 -0.07 L9.48 2.20 L10.77 2.73 L12.43 1.18 L14.42 3.17 L12.87 4.83Z" fill="#444"/><circle cx="8" cy="7.6" r="6" fill="#444"/><circle cx="8" cy="7.6" r="2.7" fill="#f8f8f8"/></svg>
<svg class="abs" style="left:1607px;top:53px;overflow:visible" width="20" height="26" viewBox="0 0 20 26" ><path d="M0 0 H14 L20 6 V26 H0Z" fill="#e9e9e0"/><path d="M14 0 L20 6 H14Z" fill="#d9d9cc"/><rect x="0" y="18" width="20" height="8" fill="#9a6eb2"/><text x="10" y="13.5" font-family="Liberation Mono,monospace" font-size="9" font-weight="bold" fill="#9d7fba" text-anchor="middle" textLength="12" lengthAdjust="spacingAndGlyphs">{;}</text><text x="10" y="24.6" font-family="Liberation Sans,sans-serif" font-size="6.6" font-weight="bold" fill="#fff" text-anchor="middle" textLength="15.4" lengthAdjust="spacingAndGlyphs">JSON</text></svg>
<svg class="abs" style="left:1648px;top:61px;overflow:visible" width="14" height="12" viewBox="0 0 14 12" ><path d="M1.4 0 H5 L6.6 1.8 H12.4 Q13.8 1.8 13.8 3.2 V10.4 Q13.8 11.8 12.4 11.8 H1.4 Q0 11.8 0 10.4 V1.4 Q0 0 1.4 0Z" fill="#ff9800"/></svg>
<svg class="abs" style="left:1702.2px;top:64px;overflow:visible" width="7.4" height="10" viewBox="0 0 7.4 10" ><path d="M1.3 .8 L5.6 4.8 L1.3 8.8" fill="none" stroke="#222" stroke-width="2.1"/></svg>
<svg class="abs" style="left:1832px;top:55.5px;overflow:visible" width="21" height="21" viewBox="0 0 21 21" ><circle cx="10.4" cy="10.3" r="8.55" fill="none" stroke="#444" stroke-width="2.5"/><path d="M13.9 5.3 L13.4 12.3 L6.9 15.6 L7.3 8.6Z" fill="#444"/><path d="M8.7 9.6 L12.2 10.5 L8.5 12.8Z" fill="#fff"/></svg>
<svg class="abs" style="left:1879.4px;top:53px;overflow:visible" width="28.6" height="26.4" viewBox="0 0 42 40" preserveAspectRatio="none"><rect x="0" y="0" width="42" height="11" fill="#7b5ba6"/><rect x="0" y="13.5" width="11.5" height="26.5" fill="#ececec"/><rect x="15" y="13.5" width="11.5" height="26.5" fill="#ececec"/><rect x="30" y="13.5" width="12" height="26.5" fill="#ececec"/><rect x="4" y="16.4" width="20.4" height="13.6" rx="5" fill="none" stroke="#5e36a0" stroke-width="3.2"/><rect x="17" y="22.4" width="20.4" height="13.6" rx="5" fill="none" stroke="#4fd3c0" stroke-width="3.2"/><circle cx="33" cy="11" r="6" fill="#7b5ba6"/><path d="M33 7 V15 M29 11 H37" stroke="#f5b400" stroke-width="2.2"/></svg>
<svg class="abs" style="left:13.7px;top:59.8px;overflow:visible" width="21" height="17" viewBox="0 0 21 17" ><path d="M0 1.6 H20.4 M0 8 H20.4 M0 14.5 H20.4" stroke="#555" stroke-width="3"/></svg>
<svg class="abs" style="left:14px;top:109px;overflow:visible" width="20" height="18" viewBox="0 0 20 18" ><path d="M1.6 .6 H6.4 L8 2.4 H18.4 Q19.4 2.4 19.4 3.4 V16.4 Q19.4 17.4 18.4 17.4 H1.6 Q.6 17.4 .6 16.4 V1.6 Q.6 .6 1.6 .6Z M.6 4.6 H19.4" fill="none" stroke="#3fa0d0" stroke-width="1.1"/><rect x="5" y="6.4" width="10.8" height="1.6" fill="#3fa0d0"/><path d="M6.4 9.2 V15.6 M10.4 9.2 V15.6 M14.4 9.2 V15.6" stroke="#666" stroke-width="2.2"/></svg>
<svg class="abs" style="left:14px;top:156.6px;overflow:visible" width="20" height="18.4" viewBox="0 0 20 18.4" ><rect x="0" y="0" width="20" height="3.8" fill="#3a9fd1"/><rect x="0" y="5.8" width="5" height="12.4" fill="#56616b"/><rect x="7.4" y="5.8" width="5" height="12.4" fill="#56616b"/><rect x="14.8" y="5.8" width="5.2" height="3" fill="#56616b"/><circle cx="16" cy="14" r="4.8" fill="#f4f4f4"/><path d="M16 10.6 V17.6 M12.4 14.1 H19.6" stroke="#1eb01e" stroke-width="1.8"/></svg>
<svg class="abs" style="left:14px;top:204.6px;overflow:visible" width="20" height="20.4" viewBox="0 0 20 20.4" ><path d="M0 3 V17.2 Q0 20.2 9.4 20.2 Q18.8 20.2 18.8 17.2 V3Z" fill="#3e86c6"/><ellipse cx="9.4" cy="3" rx="9.4" ry="2.9" fill="#3e86c6"/><path d="M0 4.4 Q9.4 8.6 18.8 4.4 M0 9.6 Q9.4 13.8 18.8 9.6 M0 14.8 Q9.4 19 18.8 14.8" fill="none" stroke="#f4f4f4" stroke-width="1.1"/><circle cx="14.8" cy="14.8" r="4.9" fill="#fff"/><text x="14.8" y="16.8" font-family="Liberation Sans,sans-serif" font-size="5.4" font-weight="bold" fill="#2d4fb0" text-anchor="middle">RD</text></svg>
<svg class="abs" style="left:14.2px;top:253.8px;overflow:visible" width="19.6" height="19.6" viewBox="0 0 19.6 19.6" ><circle cx="9.8" cy="9.8" r="9.7" fill="#5db9f6"/><path d="M8.6 5.4 H3.6 L6.8 9.8 L3.6 14.2 H8.8" fill="none" stroke="#fff" stroke-width="1.2"/><path d="M13.6 4.6 Q16 5 16 8.4 Q16.2 10.4 17.4 11.2 H9.8 Q11 10.4 11.2 8.4 Q11.2 5 13.6 4.6Z" fill="#e8f5ff"/><path d="M7 9.8 H12" stroke="#9ccff5" stroke-width="1"/><circle cx="13.6" cy="13.6" r=".9" fill="#fff"/></svg>
<svg class="abs" style="left:78.8px;top:107px;overflow:visible" width="42" height="40" viewBox="0 0 42 40" preserveAspectRatio="none"><rect x="0" y="0" width="42" height="11" fill="#9e89bf"/><rect x="0" y="13.5" width="11.5" height="26.5" fill="#ececec"/><rect x="15" y="13.5" width="11.5" height="26.5" fill="#ececec"/><rect x="30" y="13.5" width="12" height="26.5" fill="#ececec"/><rect x="4" y="16.4" width="20.4" height="13.6" rx="5" fill="none" stroke="#9b7fc4" stroke-width="3.2"/><rect x="17" y="22.4" width="20.4" height="13.6" rx="5" fill="none" stroke="#7fe0d3" stroke-width="3.2"/></svg>
<svg class="abs" style="left:923.6px;top:110px;overflow:visible" width="16" height="15" viewBox="0 0 16 15" ><circle cx="7.7" cy="7.4" r="6.6" fill="none" stroke="#111" stroke-width="1.6"/><path d="M8.4 3.6 V8.3 H4.8" fill="none" stroke="#111" stroke-width="1.3"/></svg>
<svg class="abs" style="left:925.4px;top:132.6px;overflow:visible" width="16" height="18.4" viewBox="0 0 16 18.4" ><circle cx="7.7" cy="11" r="6.7" fill="none" stroke="#111" stroke-width="1.3"/><path d="M5.4 1.4 H10 M1.2 4.6 L3 3" stroke="#111" stroke-width="1.2" fill="none"/><path d="M6.8 8.6 L9.2 11 L6.8 13.4" fill="none" stroke="#111" stroke-width="1.2"/></svg>
<svg class="abs" style="left:1346.6px;top:110px;overflow:visible" width="15" height="15.4" viewBox="0 0 15 15.4" ><circle cx="7.3" cy="4.4" r="4" fill="#111"/><path d="M3.4 7.2 Q7.3 10.6 11.2 7.2 Q14.4 8.2 14.4 12.2 Q14.4 15 11.8 15 H2.8 Q.2 15 .2 12.2 Q.2 8.2 3.4 7.2Z" fill="#111"/></svg>
<svg class="abs" style="left:1346.6px;top:136.8px;overflow:visible" width="16" height="15.4" viewBox="0 0 16 15.4" ><path d="M.2 15.2 L1 10.8 L9.6 2.2 L13.2 5.8 L4.6 14.4Z M10.6 1.3 L11.9 0 Q12.6 -.5 13.3 .1 L15.4 2.2 Q16 2.9 15.4 3.6 L14.1 4.9Z" fill="#111"/><path d="M2.6 11.8 L9.8 4.6" stroke="#fff" stroke-width=".7"/><path d="M1.2 12.4 L3 14.2" stroke="#fff" stroke-width=".7"/></svg>
<svg class="abs" style="left:1764px;top:92px;overflow:visible" width="155" height="86" viewBox="0 0 155 86" ><path d="M55.5 38.7 L71.8 54.6 L100.3 26.3" fill="none" stroke="#fff" stroke-width="11.6" stroke-linejoin="miter"/><path d="M55.5 38.7 L71.8 54.6 L100.3 26.3" fill="none" stroke="#fff" stroke-width="2" stroke-linejoin="round" stroke-linecap="round" transform="translate(0 0)"/></svg>
<svg class="abs" style="left:125px;top:150px;overflow:visible" width="24" height="56" viewBox="0 0 24 56" ><g style="filter:drop-shadow(1px 2px 1.5px rgba(0,0,0,.35))"><path d="M6.4 6.4 L13.6 45.5" stroke="#eb3b43" stroke-width="1.5" fill="none"/><path d="M14.6 49.6 L10.6 43 L16.4 42Z" fill="#eb3b43"/></g></svg>
<div class="abs" style="left:1899px;top:184px;width:20px;height:13px;background:#f1f1f1"></div>
<svg class="abs" style="left:1906.6px;top:186px;overflow:visible" width="7" height="8.4" viewBox="0 0 7 8.4" ><path d="M.2 2.9 H6.6 L3.4 .2Z" fill="#9a9a9a"/><path d="M.2 5 H6.6 L3.4 8.2Z" fill="#333"/></svg>
<svg class="abs" style="left:54.2px;top:252.6px;overflow:visible" width="20" height="20" viewBox="0 0 20 20" ><circle cx="10" cy="10" r="10" fill="#fd7e14"/><path d="M10 6.3 A3.1 3.1 0 0 1 11.9 11.9 L13.6 19.4 Q10 20.6 6.4 19.4 L8.1 11.9 A3.1 3.1 0 0 1 10 6.3Z" fill="#fafafa"/></svg>
<svg class="abs" style="left:1432px;top:258px;overflow:visible" width="15.4" height="16" viewBox="0 0 15.4 16" ><path d="M.6 .8 L7.6 6.8 L14.6 .8 M.6 8.4 L7.6 14.4 L14.6 8.4" fill="none" stroke="#d3d3d3" stroke-width="1.5"/></svg>
<svg class="abs" style="left:1478px;top:255px;overflow:visible" width="19" height="21" viewBox="0 0 19 21" ><path d="M2.4 .6 H12.4 L16.6 4.8 V20.4 H2.4Z" fill="#fff" stroke="#14c23c" stroke-width="1.1"/><path d="M12.2 .6 V5 H16.6Z" fill="#14c23c"/><rect x="0" y="7.2" width="19" height="8.8" rx="1" fill="#14c23c"/><text x="9.5" y="14.6" font-family="Liberation Sans,sans-serif" font-size="8.2" font-weight="bold" fill="#fff" text-anchor="middle" textLength="16.6" lengthAdjust="spacingAndGlyphs">CSV</text></svg>
<svg class="abs" style="left:1876.4px;top:256px;overflow:visible" width="17" height="16" viewBox="0 0 17 16" ><circle cx="6.6" cy="6.6" r="5.2" fill="none" stroke="#111" stroke-width="2.1"/><path d="M10.6 10.4 L15.6 15.2" stroke="#111" stroke-width="2.6" stroke-linecap="round"/></svg>
<svg class="abs" style="left:1880px;top:309.4px;overflow:visible" width="10" height="6.6" viewBox="0 0 10 6.6" ><path d="M0 6.4 H10 L5 .2Z" fill="#8a8a8a"/></svg>
<svg class="abs" style="left:1880px;top:806px;overflow:visible" width="10" height="6.6" viewBox="0 0 10 6.6" ><path d="M0 .2 H10 L5 6.4Z" fill="#8a8a8a"/></svg>
<svg class="abs" style="left:74px;top:828px;overflow:visible" width="6" height="11" viewBox="0 0 6 11" ><path d="M5.8 0 V11 L.2 5.5Z" fill="#8a8a8a"/></svg>
<svg class="abs" style="left:1861.4px;top:828px;overflow:visible" width="6" height="11" viewBox="0 0 6 11" ><path d="M.2 0 V11 L5.8 5.5Z" fill="#8a8a8a"/></svg>
<svg class="abs" style="left:1676px;top:864px;overflow:visible" width="12" height="7" viewBox="0 0 12 7" ><path d="M.2 .4 H11.6 L5.9 6.4Z" fill="#8a8a8a"/></svg>
<svg class="abs" style="left:1832px;top:862px;overflow:visible" width="7" height="11" viewBox="0 0 7 11" ><path d="M6.4 0 V11 L.4 5.5Z" fill="#8a8a8a"/></svg>
<svg class="abs" style="left:1874px;top:862px;overflow:visible" width="7" height="11" viewBox="0 0 7 11" ><path d="M.4 0 V11 L6.6 5.5Z" fill="#8a8a8a"/></svg>
</body></html>
